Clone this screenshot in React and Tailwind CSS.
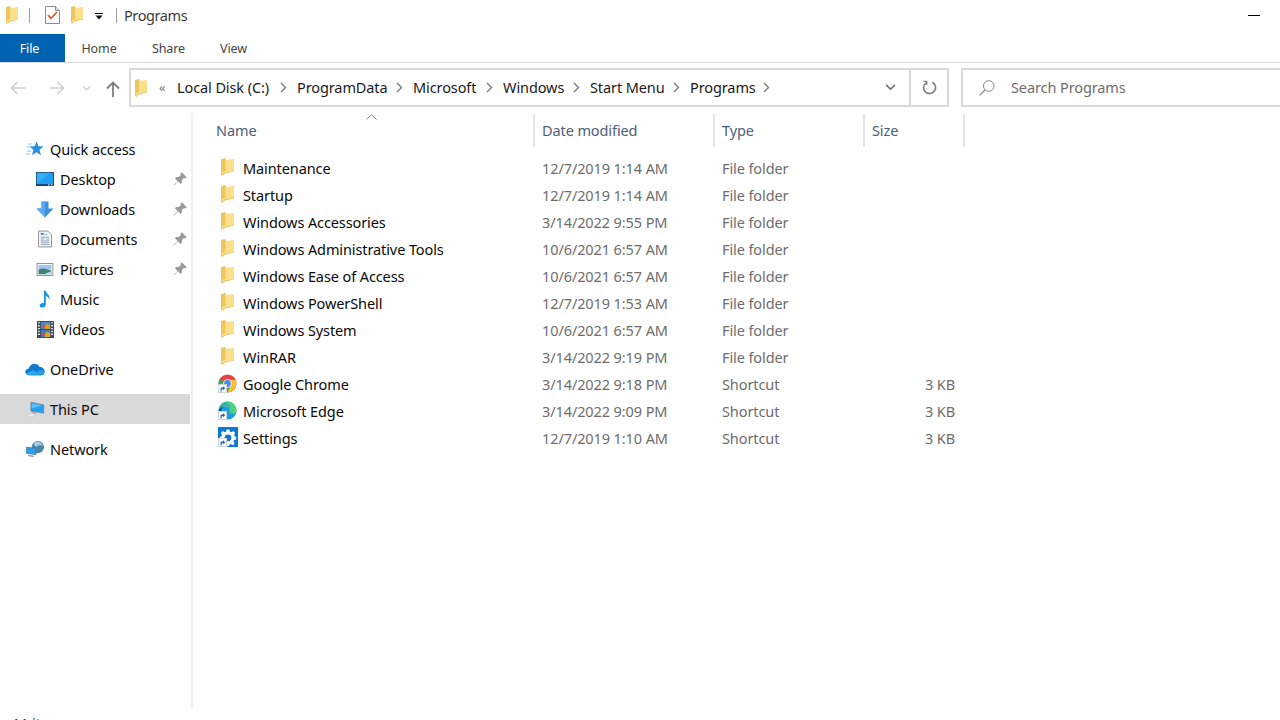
import React from "react";

const Folder = ({ className = "w-[13px] h-[18px]" }) => (
  <svg viewBox="0 0 13 18" className={className} preserveAspectRatio="none">
    <path d="M0 1 L4.5 0 L5 2 L5 13.5 L1 17.5 L0 17 Z" fill="#eec65f" />
    <path d="M4.5 2 L13 1 L13 13 L3.5 15 L1 17.5 L1 14 L4.5 13 Z" fill="#fbe08c" />
    <path d="M1 17.6 L3.5 14.6 L12.6 13 L13 13 L13 13.4 L4 15.4 L1.2 18 Z" fill="#e8c058" />
  </svg>
);

const Shortcut = () => (
  <svg viewBox="0 0 9 9" className="absolute left-0 bottom-0 w-[9px] h-[9px]">
    <rect x="0" y="0" width="9" height="9" fill="#fff" />
    <rect x="0.5" y="0.5" width="8" height="8" fill="#fff" stroke="#b8b8b8" strokeWidth="0.6" />
    <path d="M2.5 7.2 V5 Q2.5 3.6 4 3.6 H5 V2.2 L7.3 4.2 L5 6.2 V4.9 H4.2 Q3.7 4.9 3.7 5.4 V7.2 Z" fill="#1565b8" />
  </svg>
);

const Chrome = () => (
  <div className="relative w-[19px] h-[19px]">
    <svg viewBox="0 0 20 20" className="w-[19px] h-[19px]">
      <circle cx="10" cy="10" r="9.5" fill="#e8453c" />
      <path d="M10 10 L1.8 5.3 A9.5 9.5 0 0 0 10 19.5 L14.7 11.5 Z" fill="#3ba757" />
      <path d="M10 6 H18.4 A9.5 9.5 0 0 1 10 19.5 L13.5 12 Z" fill="#fbc02d" />
      <circle cx="10" cy="10" r="4.6" fill="#fff" />
      <circle cx="10" cy="10" r="3.6" fill="#4a8af4" />
    </svg>
    <Shortcut />
  </div>
);

const Edge = () => (
  <div className="relative w-[19px] h-[19px]">
    <svg viewBox="0 0 20 20" className="w-[19px] h-[19px]">
      <path d="M0.5 9 C1.5 3.5 5.5 0.5 10 0.5 C15.5 0.5 19.5 5 19.5 10 C19.5 12.5 17 13.5 14.5 13 C12.5 12.6 11.5 11.4 12.5 10 C12.5 7 10.5 5.5 8 5.5 C4.5 5.5 1.5 7 0.5 9 Z" fill="#2fb8a0" />
      <path d="M10 0.5 C15.5 0.5 19.5 5 19.5 10 C19.5 12.5 17 13.5 14.5 13 C13 12.6 12 11.6 12.3 10.6 C14 7 12.5 2.5 8 1 Z" fill="#4fd17e" />
      <path d="M0.5 9 C2.5 6 5.5 5.3 8 5.5 C5 6.5 4 9 4.5 12 C5 15.5 8 19 12 19.2 C6 21 0 16 0.5 9 Z" fill="#0b5fa8" />
      <path d="M8 5.5 C11 5.5 12.7 7.5 12.5 10 C11.5 11.4 12.5 12.6 14.5 13 C17 13.5 19.5 12.5 19.5 10 C19.5 14 16 19 12 19.2 C8 19 5 15.5 4.5 12 C4 9 5 6.5 8 5.5 Z" fill="#1b9de2" />
    </svg>
    <Shortcut />
  </div>
);

const SettingsIcon = () => (
  <div className="relative w-[20px] h-[20px]">
    <svg viewBox="0 0 20 20" className="w-[20px] h-[20px]">
      <rect width="20" height="20" fill="#0a78d4" />
      <path d="M8.6 2.5 H11.4 L11.8 4.6 L13.5 5.3 L15.3 4.1 L17.2 6 L16 7.8 L16.7 9.4 L18.2 9.8 V12.5 L16.1 12.9 L15.4 14.6 L16.6 16.4 L14.7 18.3 L12.9 17.1 L11.3 17.8 L10.9 19 H8.7 L8.3 17.8 L6.6 17.1 L4.8 18.3 L2.9 16.4 L4.1 14.6 L3.4 12.9 L1.8 12.5 V9.8 L3.4 9.4 L4.1 7.8 L2.9 6 L4.8 4.1 L6.6 5.3 L8.2 4.6 Z M10 7.4 A3.4 3.4 0 1 0 10 14.2 A3.4 3.4 0 1 0 10 7.4 Z" fill="#fff" fillRule="evenodd" />
    </svg>
    <Shortcut />
  </div>
);

const PinIcon = () => (
  <svg viewBox="0 0 14 14" className="w-[14px] h-[14px]">
    <path d="M8.8 0.3 L13.7 5.2 L12.2 6.4 L11 6 L8.9 8.1 L9 10.6 L7.6 12 L4.9 9.3 L1 13.4 L0.6 13 L4.5 8.9 L1.9 6.3 L3.3 4.9 L5.8 5 L7.9 2.9 L7.5 1.7 Z" fill="#9a9a9a" />
  </svg>
);

const QuickIcon = () => (
  <svg viewBox="0 0 18 16" className="w-[18px] h-[16px]">
    <path d="M10.5 0.3 L12.4 5.3 L17.6 5.5 L13.5 8.8 L15 14.2 L10.5 11.2 L6 14.2 L7.4 8.8 L3.5 5.5 L8.6 5.3 Z" fill="#2a8fe0" />
    <path d="M1.5 3 H6.5 M0.5 6 H4 M1 10 H5 M0 13 H4" stroke="#8cc8f2" strokeWidth="1.1" />
  </svg>
);

const DesktopIcon = () => (
  <svg viewBox="0 0 18 14" className="w-[18px] h-[14px]">
    <rect x="0" y="0" width="18" height="14" fill="#1c3d5c" />
    <rect x="0.8" y="0.8" width="16.4" height="11.4" fill="#1f9df0" />
    <path d="M0.8 12.2 L14 0.8 H0.8 Z" fill="#34aef5" />
    <rect x="12" y="12.4" width="1.5" height="1" fill="#fff" />
    <rect x="15" y="12.4" width="1.5" height="1" fill="#fff" />
  </svg>
);

const DownloadIcon = () => (
  <svg viewBox="0 0 18 17" className="w-[18px] h-[17px]">
    <path d="M5.5 0.5 H12.5 V7.5 H17.5 L9 16.5 L0.5 7.5 H5.5 Z" fill="#3e8ede" />
    <path d="M5.5 0.5 H9 V16.5 L0.5 7.5 H5.5 Z" fill="#5aa8ee" />
  </svg>
);

const DocIcon = () => (
  <svg viewBox="0 0 15 18" className="w-[14px] h-[18px]">
    <path d="M0.5 0.5 H10.5 L14.5 4.5 V17.5 H0.5 Z" fill="#f4f4f4" stroke="#8a8a8a" />
    <path d="M3 3.5 H6" stroke="#2e82c9" strokeWidth="2" />
    <path d="M7 4 H10 M3 7 H12 M3 9 H7 M9 9 H12 M3 11 H12 M3 13 H12 M3 15 H12" stroke="#8aa0b2" />
  </svg>
);

const PictureIcon = () => (
  <svg viewBox="0 0 18 14" className="w-[18px] h-[13px]">
    <rect x="0.5" y="0.5" width="17" height="13" fill="#fff" stroke="#8d8d8d" />
    <rect x="2" y="2" width="14" height="5" fill="#9fc9ec" />
    <path d="M2 7 L7 5.6 L16 8 V12 H2 Z" fill="#3f7f78" />
    <path d="M8 12 L16 8.5 V12 Z" fill="#c4d9dc" />
  </svg>
);

const MusicIcon = () => (
  <svg viewBox="0 0 12 18" className="w-[12px] h-[18px]">
    <path d="M5 0.5 H6.6 C7 3.5 11.5 5 10.5 10 C10 7.5 8.5 6.5 6.8 6 V14.5 C6.8 16.5 4.5 17.8 2.6 17.6 C0.8 17.4 0.2 15.8 1 14.5 C2 13 3.8 12.6 5 13.2 Z" fill="#1597e5" />
  </svg>
);

const VideoIcon = () => (
  <svg viewBox="0 0 18 18" className="w-[17px] h-[17px]">
    <rect width="18" height="18" fill="#3f4a56" />
    <rect x="4" y="1" width="10" height="7.5" fill="#4d88cf" />
    <rect x="4" y="9.5" width="10" height="7.5" fill="#3d7bc4" />
    <path d="M8 8.5 L9.5 3 L14 4 V8.5 Z" fill="#d2a32c" />
    <path d="M8 17 L9.5 11.5 L14 12.5 V17 Z" fill="#e0a52e" />
    <circle cx="7" cy="5.5" r="1.5" fill="#d6503f" />
    <circle cx="7" cy="14" r="1.5" fill="#d6503f" />
    <path d="M1 2 H3 M1 5 H3 M1 8 H3 M1 11 H3 M1 14 H3 M15 2 H17 M15 5 H17 M15 8 H17 M15 11 H17 M15 14 H17" stroke="#e3e3e3" strokeWidth="1.4" />
  </svg>
);

const OneDriveIcon = () => (
  <svg viewBox="0 0 21 13" className="w-[20px] h-[13px]">
    <path d="M4.5 12.5 C1.5 12.5 0 10.5 0.3 8.6 C0.6 6.8 2 5.6 3.8 5.6 C4.8 2 8 0.3 10.5 0.5 C13 0.7 14.8 2.4 15.3 4 C18.5 4 20.8 6.2 20.6 9 C20.5 11 19 12.5 17 12.5 Z" fill="#0f78d0" />
    <path d="M4.5 12.5 C3 12.5 1.5 12 0.8 10.6 L8.5 7.4 L14 9.8 L10 12.5 Z" fill="#28a8ea" />
    <path d="M8 12.5 L15 7 C17 6.5 20 7.5 20.6 9 C20.5 11 19 12.5 17 12.5 Z" fill="#2a9ae6" />
  </svg>
);

const PcIcon = () => (
  <svg viewBox="0 0 22 18" className="w-[21px] h-[17px]">
    <path d="M0.5 15.5 L7 13.2 L13 14.2 L7.5 17 Z" fill="#ececec" stroke="#c4c4c4" strokeWidth="0.5" />
    <path d="M7 10.5 L12 11.6 V14 L7 12.8 Z" fill="#a9b0b5" />
    <path d="M6.5 1 L20.5 4 V13 L6.5 10.4 Z" fill="#26a0f0" stroke="#5a7f99" strokeWidth="0.8" />
    <path d="M7.5 2 L19 4.6 L7.5 8 Z" fill="#5cbdf7" />
  </svg>
);

const NetworkIcon = () => (
  <svg viewBox="0 0 20 18" className="w-[19px] h-[18px]">
    <circle cx="12.5" cy="7" r="6.5" fill="#4c87ab" />
    <path d="M9 2 C12 0.5 17 2 18 6 C15 4 12 5 11 7 C9 6 8 4 9 2 Z" fill="#a9cfe2" />
    <path d="M0.5 7 L10.5 8.5 V15 L0.5 13.5 Z" fill="#27a0ef" stroke="#4d7791" strokeWidth="0.8" />
    <path d="M2.5 15 L8 16 L8.5 17.5 L2 16.5 Z" fill="#8d9aa4" />
  </svg>
);

const SearchIcon = () => (
  <svg viewBox="0 0 16 16" className="w-[16px] h-[16px]" fill="none" stroke="#8a8a8a">
    <circle cx="9.8" cy="6" r="5.3" strokeWidth="1" />
    <path d="M6 10 L0.6 15.4" strokeWidth="1.2" />
  </svg>
);

const CheckDoc = () => (
  <svg viewBox="0 0 15 18" className="w-[15px] h-[18px]">
    <path d="M0.5 0.5 H10.5 L14.5 4.5 V17.5 H0.5 Z" fill="#fff" stroke="#8a8a8a" />
    <path d="M10.5 0.5 V4.5 H14.5" fill="#e5e5e5" stroke="#8a8a8a" />
    <path d="M3 9 L6 12.3 L12 6" fill="none" stroke="#e0562a" strokeWidth="1.7" />
  </svg>
);

const Arrow = ({ dir, color }) => (
  <svg viewBox="0 0 16 14" className="w-[16px] h-[14px]" fill="none" stroke={color} strokeWidth="1.6">
    {dir === "left" ? <path d="M15.5 7 H1.5 M7.5 1 L1.5 7 L7.5 13" /> : <path d="M0.5 7 H14.5 M8.5 1 L14.5 7 L8.5 13" />}
  </svg>
);

const Crumb = ({ label, w }) => (
  <div className={`flex items-center justify-between shrink-0 ${w}`}>
    <span>{label}</span>
    <svg viewBox="0 0 7 11" className="w-[7px] h-[11px] mr-[10px]" fill="none" stroke="#7a7a7a" strokeWidth="1.4">
      <path d="M1 1 L5.5 5.5 L1 10" />
    </svg>
  </div>
);

const NavRow = ({ icon, label, pinned, indent, selected }) => (
  <div className={`h-[30px] flex items-center w-[190px] ${selected ? "bg-[#d9d9d9]" : ""}`}>
    <div className={`flex justify-center shrink-0 ${indent ? "ml-[35px] w-[20px]" : "ml-[25px] w-[20px]"}`}>{icon}</div>
    <span className="ml-[5px] flex-1 text-[#0a0a0a]">{label}</span>
    {pinned && <div className="mr-[3px] flex"><PinIcon /></div>}
  </div>
);

const files = [
  ["Maintenance", "12/7/2019 1:14 AM", "File folder", "", <Folder />],
  ["Startup", "12/7/2019 1:14 AM", "File folder", "", <Folder />],
  ["Windows Accessories", "3/14/2022 9:55 PM", "File folder", "", <Folder />],
  ["Windows Administrative Tools", "10/6/2021 6:57 AM", "File folder", "", <Folder />],
  ["Windows Ease of Access", "10/6/2021 6:57 AM", "File folder", "", <Folder />],
  ["Windows PowerShell", "12/7/2019 1:53 AM", "File folder", "", <Folder />],
  ["Windows System", "10/6/2021 6:57 AM", "File folder", "", <Folder />],
  ["WinRAR", "3/14/2022 9:19 PM", "File folder", "", <Folder />],
  ["Google Chrome", "3/14/2022 9:18 PM", "Shortcut", "3 KB", <Chrome />],
  ["Microsoft Edge", "3/14/2022 9:09 PM", "Shortcut", "3 KB", <Edge />],
  ["Settings", "12/7/2019 1:10 AM", "Shortcut", "3 KB", <SettingsIcon />],
];

export default function App() {
  return (
    <div className="w-[1280px] h-[720px] overflow-hidden bg-white flex flex-col font-['Noto_Sans',sans-serif] text-[14.5px] tracking-[-0.1px] leading-none">
      {/* Title bar */}
      <div className="h-[34px] flex items-center shrink-0 pb-[4px] relative">
        <div className="ml-[6px] flex"><Folder className="w-[12px] h-[18px]" /></div>
        <div className="ml-[11px] w-px h-[15px] bg-[#a0a0a0]" />
        <div className="ml-[15px] flex"><CheckDoc /></div>
        <div className="ml-[11px] flex"><Folder className="w-[12px] h-[18px]" /></div>
        <svg viewBox="0 0 8 7" className="ml-[12px] w-[8px] h-[7px] mt-[3px]">
          <path d="M0 0 H8 V1 H0 Z M0.5 2.5 H7.5 L4 6.5 Z" fill="#111" />
        </svg>
        <div className="ml-[13px] w-px h-[15px] bg-[#a0a0a0]" />
        <span className="ml-[7px] text-[#3b3b3b] text-[14.5px] tracking-[-0.4px]">Programs</span>
        <div className="ml-auto mr-[20px] w-[12px] h-px bg-black" />
      </div>
      {/* Ribbon tabs */}
      <div className="h-[29px] flex border-b border-[#dadada] shrink-0 text-[12.5px] text-[#444]">
        <div className="w-[65px] h-[28px] pt-[2px] pr-[6px] bg-[#0063b1] text-white flex items-center justify-center">File</div>
        <div className="ml-[17px] w-[34px] h-[28px] pt-[2px] flex items-center justify-center">Home</div>
        <div className="ml-[36px] w-[33px] h-[28px] pt-[2px] flex items-center justify-center">Share</div>
        <div className="ml-[35px] w-[27px] h-[28px] pt-[2px] flex items-center justify-center">View</div>
      </div>
      {/* Address row */}
      <div className="h-[50px] flex items-start pt-[5px] shrink-0">
        <div className="w-[129px] h-[39px] flex items-center shrink-0">
          <div className="ml-[10px] flex"><Arrow dir="left" color="#cfcfcf" /></div>
          <div className="ml-[23px] flex"><Arrow dir="right" color="#cfcfcf" /></div>
          <svg viewBox="0 0 10 6" className="ml-[17px] w-[9px] h-[6px]" fill="none" stroke="#cfcfcf" strokeWidth="1.4"><path d="M1 1 L5 5 L9 1" /></svg>
          <svg viewBox="0 0 14 16" className="ml-[15px] w-[14px] h-[16px] mt-[2px]" fill="none" stroke="#7d7d7d" strokeWidth="1.8"><path d="M7 16 V1.5 M1 7.5 L7 1.5 L13 7.5" /></svg>
        </div>
        <div className="w-[820px] h-[39px] border-2 border-[#d9d9d9] flex items-center text-[#1a1a1a] shrink-0">
          <div className="ml-[4px] flex"><Folder className="w-[12px] h-[18px]" /></div>
          <span className="ml-[12px] w-[18px] text-[#7a7a7a] text-[13px]">«</span>
          <Crumb label="Local Disk (C:)" w="w-[120px]" />
          <Crumb label="ProgramData" w="w-[116px]" />
          <Crumb label="Microsoft" w="w-[90px]" />
          <Crumb label="Windows" w="w-[87px]" />
          <Crumb label="Start Menu" w="w-[100px]" />
          <Crumb label="Programs" w="w-[90px]" />
          <div className="ml-auto flex h-full">
            <div className="w-[38px] flex items-center justify-center">
              <svg viewBox="0 0 12 8" className="w-[11px] h-[7px]" fill="none" stroke="#6f6f6f" strokeWidth="1.8"><path d="M1 1 L6 6 L11 1" /></svg>
            </div>
            <div className="w-[38px] border-l-2 border-[#d9d9d9] flex items-center justify-center">
              <svg viewBox="0 0 16 16" className="w-[15px] h-[15px]" fill="none" stroke="#808080" strokeWidth="1.7">
                <path d="M4.2 3 A6.4 6.4 0 1 0 11 2.4" />
                <path d="M1.5 1.5 H5 V5" strokeWidth="1.5" />
              </svg>
            </div>
          </div>
        </div>
        <div className="ml-[12px] w-[330px] h-[39px] border-2 border-[#d9d9d9] flex items-center shrink-0">
          <div className="ml-[16px] flex"><SearchIcon /></div>
          <span className="ml-[16px] text-[#6d6d6d]">Search Programs</span>
        </div>
      </div>
      {/* Body */}
      <div className="h-[596px] flex shrink-0">
        <div className="w-[193px] border-r-2 border-[#f0f0f0] pt-[21px] shrink-0">
          <NavRow icon={<QuickIcon />} label="Quick access" />
          <NavRow indent pinned icon={<DesktopIcon />} label="Desktop" />
          <NavRow indent pinned icon={<DownloadIcon />} label="Downloads" />
          <NavRow indent pinned icon={<DocIcon />} label="Documents" />
          <NavRow indent pinned icon={<PictureIcon />} label="Pictures" />
          <NavRow indent icon={<MusicIcon />} label="Music" />
          <NavRow indent icon={<VideoIcon />} label="Videos" />
          <div className="h-[10px]" />
          <NavRow icon={<OneDriveIcon />} label="OneDrive" />
          <div className="h-[10px]" />
          <NavRow selected icon={<PcIcon />} label="This PC" />
          <div className="h-[10px]" />
          <NavRow icon={<NetworkIcon />} label="Network" />
        </div>
        <div className="flex-1 pl-[15px]">
          {/* header */}
          <div className="relative flex h-[33px] mt-[1px] text-[#4c607a]">
            <div className="w-[327px] pl-[8px] flex items-center border-r-2 border-[#e5e5e5]">Name</div>
            <div className="w-[180px] pl-[7px] flex items-center border-r-2 border-[#e5e5e5]">Date modified</div>
            <div className="w-[150px] pl-[7px] flex items-center border-r-2 border-[#e5e5e5]">Type</div>
            <div className="w-[100px] pl-[7px] flex items-center border-r-2 border-[#e5e5e5]">Size</div>
            <svg viewBox="0 0 11 6" className="absolute left-[158px] top-[0px] w-[11px] h-[6px]" fill="none" stroke="#8a8a8a" strokeWidth="1"><path d="M0.5 5.5 L5.5 0.5 L10.5 5.5" /></svg>
          </div>
          <div className="mt-[8px]">
            {files.map(([name, date, type, size, icon]) => (
              <div key={name} className="h-[27px] flex items-center">
                <div className="w-[326px] flex items-center">
                  <div className="w-[20px] ml-[10px] pr-[1px] flex justify-center -mt-[3px]">{icon}</div>
                  <span className="ml-[5px] text-[#0a0a0a]">{name}</span>
                </div>
                <div className="w-[180px] pl-[8px] text-[#6d6d6d]">{date}</div>
                <div className="w-[150px] pl-[8px] text-[#6d6d6d]">{type}</div>
                <div className="w-[91px] text-right text-[#6d6d6d]">{size}</div>
              </div>
            ))}
          </div>
        </div>
      </div>
      <div className="pl-[12px] pt-[7px] text-[#333]">11 items</div>
    </div>
  );
}
